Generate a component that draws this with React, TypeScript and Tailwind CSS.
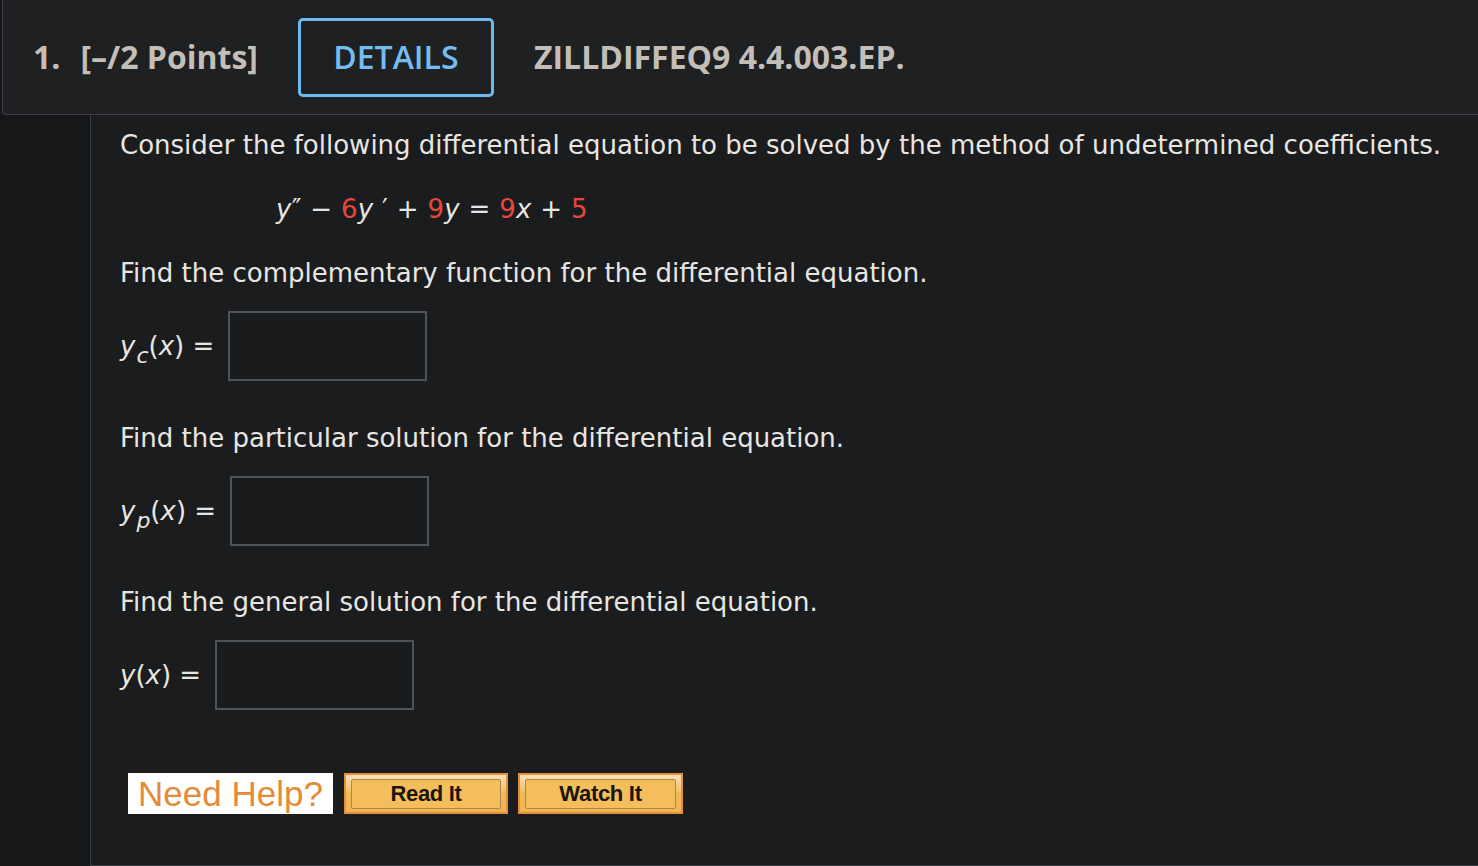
import React from "react";

const hdr = { fontFamily: '"Open Sans", "Liberation Sans", sans-serif' };
const body = { fontFamily: '"DejaVu Sans", Verdana, sans-serif' };

function Box() {
  return <div className="ml-[14px] w-[199px] h-[70px] border-2 border-[#4f5357] bg-[#1a1b1d]" />;
}

function OrangeBtn({ label, w }: { label: string; w: string }) {
  return (
    <div className={`${w} h-[41px] border-2 border-[#e48f3a] bg-gradient-to-b from-[#fbe3bd] via-[#f2ba5a] to-[#f0b453] px-[5px] pt-[4px] pb-[3px]`}>
      <div className="h-full border border-[#b3834a] bg-[#f4be5c] flex items-center justify-center rounded-[2px]">
        <span
          className="text-[22px] font-bold text-[#1a1508] leading-none tracking-[-0.3px]"
          style={{ fontFamily: '"Liberation Sans", Arial, sans-serif' }}
        >
          {label}
        </span>
      </div>
    </div>
  );
}

export default function App() {
  const red = "text-[#e8473d]";
  return (
    <div className="w-[1478px] h-[866px] bg-[#161719] overflow-hidden">
      <header
        className="ml-[2px] h-[115px] bg-[#1f2022] border-l border-b border-[#3f4043] rounded-bl-[4px] flex items-center text-[32px] font-bold text-[#c3beb7]"
        style={hdr}
      >
        <span className="ml-[30px]">1.</span>
        <span className="ml-[20px]">[–/2 Points]</span>
        <div className="ml-[40px] w-[196px] h-[79px] border-[3px] border-[#6db9f2] rounded-[5px] flex items-center justify-center text-[#74bdf2] font-semibold">
          DETAILS
        </div>
        <span className="ml-[40px]">ZILLDIFFEQ9 4.4.003.EP.</span>
      </header>
      <div className="flex">
        <div className="w-[90px] shrink-0" />
        <main
          className="flex-1 h-[751px] bg-[#1b1c1e] border-l border-b border-[#3d4043] pl-[29px] pt-[14px] text-[26px] text-[#e8e6e2]"
          style={body}
        >
          <p className="leading-[32px]">
            Consider the following differential equation to be solved by the method of undetermined coefficients.
          </p>
          <p className="leading-[32px] mt-[32px] ml-[156px] tracking-[0.3px]">
            <i>y</i>″ − <span className={red}>6</span>
            <i>y</i> ′ + <span className={red}>9</span>
            <i>y</i> = <span className={red}>9</span>
            <i>x</i> + <span className={red}>5</span>
          </p>
          <p className="leading-[32px] mt-[32px]">Find the complementary function for the differential equation.</p>
          <div className="mt-[22px] flex items-center h-[70px]">
            <span>
              <i>y</i>
              <i className="text-[22px] relative top-[8px] ml-[1px]">c</i>
              (<i>x</i>) =
            </span>
            <Box />
          </div>
          <p className="leading-[32px] mt-[41px]">Find the particular solution for the differential equation.</p>
          <div className="mt-[22px] flex items-center h-[70px]">
            <span>
              <i>y</i>
              <i className="text-[22px] relative top-[8px] ml-[1px]">p</i>
              (<i>x</i>) =
            </span>
            <Box />
          </div>
          <p className="leading-[32px] mt-[40px]">Find the general solution for the differential equation.</p>
          <div className="mt-[22px] flex items-center h-[70px]">
            <span>
              <i>y</i>(<i>x</i>) =
            </span>
            <Box />
          </div>
          <div className="mt-[63px] ml-[8px] flex items-center">
            <div className="w-[205px] h-[41px] bg-white flex items-center justify-center">
              <span
                className="text-[35px] text-[#e38b38] leading-none"
                style={{ fontFamily: '"Liberation Sans", Arial, sans-serif' }}
              >
                Need Help?
              </span>
            </div>
            <div className="ml-[11px]">
              <OrangeBtn label="Read It" w="w-[164px]" />
            </div>
            <div className="ml-[10px]">
              <OrangeBtn label="Watch It" w="w-[165px]" />
            </div>
          </div>
        </main>
      </div>
    </div>
  );
}
